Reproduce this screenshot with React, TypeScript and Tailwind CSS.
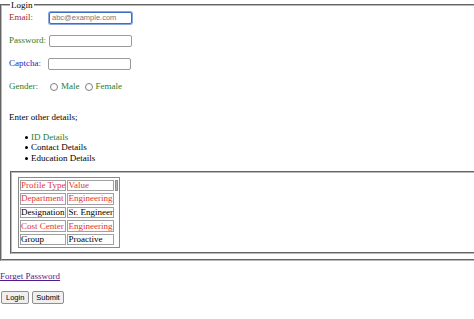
import React from "react";

const serif = "font-['Liberation_Serif','Times_New_Roman',serif]";
const sans = "font-['Liberation_Sans',Arial,sans-serif]";

function TextBox({ placeholder, focus }: { placeholder?: string; focus?: boolean }) {
  return (
    <div
      className={`w-[83px] h-[12px] rounded-[2px] bg-white flex items-center pl-[2px] ${sans} text-[7.5px] text-[#777] leading-none ${
        focus ? "border border-[#3f6cc9] shadow-[0_0_0_1px_#8aa6e3]" : "border border-[#9a9a9a]"
      }`}
    >
      {placeholder}
    </div>
  );
}

function Radio() {
  return <div className="w-[8px] h-[8px] rounded-full border border-[#808080] bg-white shrink-0" />;
}

const rows: { k: string; v: string; red: boolean }[] = [
  { k: "Profile Type", v: "Value", red: true },
  { k: "Department", v: "Engineering", red: true },
  { k: "Designation", v: "Sr. Engineer", red: false },
  { k: "Cost Center", v: "Engineering", red: true },
  { k: "Group", v: "Proactive", red: false },
];

function Item({ children, className }: { children: React.ReactNode; className?: string }) {
  return (
    <li className={`flex items-center h-[10.5px] ${className ?? ""}`}>
      <span className="w-[3px] h-[3px] rounded-full bg-black mr-[3px]" />
      {children}
    </li>
  );
}

export default function App() {
  return (
    <div className={`w-[474px] h-[319px] overflow-hidden bg-white text-black ${serif} text-[9px]`}>
      <fieldset className="m-0 w-[700px] border-2 [border-style:groove] border-[#b8b8b8] pl-[7px] pr-2 pb-[5px] pt-0">
        <legend className="ml-[1px] px-[1px] leading-[10px] text-[9px]">Login</legend>
        <div className="mt-[2px] flex flex-col gap-[11px]">
          <div className="h-[12px] flex items-center">
            <span className="w-[40px] text-[#a52a2a]">Email:</span>
            <TextBox placeholder="abc@example.com" focus />
          </div>
          <div className="h-[12px] flex items-center">
            <span className="w-[40px] text-[#2a7d2a]">Password:</span>
            <TextBox />
          </div>
          <div className="h-[12px] flex items-center">
            <span className="w-[39px] text-[#1c1cc8]">Captcha:</span>
            <TextBox />
          </div>
          <div className="h-[12px] flex items-center text-[#2a7d2a]">
            <span className="w-[41px]">Gender:</span>
            <Radio />
            <span className="ml-[3px]">Male</span>
            <div className="ml-[5px]">
              <Radio />
            </div>
            <span className="ml-[3px]">Female</span>
          </div>
        </div>
        <div className="mt-[19px] leading-[10px]">Enter other details;</div>
        <ul className="mt-[10px] pl-[16px] list-none">
          <Item className="text-[#2a7d2a]">ID Details</Item>
          <Item>Contact Details</Item>
          <Item>Education Details</Item>
        </ul>
        <fieldset className="mt-[7px] ml-[1px] mr-0 mb-0 border-2 [border-style:groove] border-[#b8b8b8] pl-[6px] pt-[4px] pb-[4px] pr-0">
          <table className="border border-[#8a8a8a] border-separate [border-spacing:1px_2px] leading-[9px]">
            <tbody>
              {rows.map((r, i) => (
                <tr key={r.k}>
                  <td
                    className={`border border-[#a0a0a0] h-[11.6px] px-0 py-0 whitespace-nowrap ${
                      r.red ? "text-[#df3535]" : "text-black"
                    }`}
                  >
                    {r.k}
                  </td>
                  <td
                    className={`border border-[#a0a0a0] h-[11.6px] px-0 py-0 whitespace-nowrap ${
                      r.red ? "text-[#df3535]" : "text-black"
                    }`}
                  >
                    {r.v}
                  </td>
                  {i === 0 ? (
                    <td className="p-0 align-top">
                      <div className="w-[3px] h-[11px] bg-[#b0b0b0] border border-[#909090]" />
                    </td>
                  ) : null}
                </tr>
              ))}
            </tbody>
          </table>
        </fieldset>
      </fieldset>
      <div className="mt-[10px] h-[10px] leading-[10px]">
        <a href="#" className="text-[#551a8b] underline">
          Forget Password
        </a>
      </div>
      <div className="mt-[10px] flex gap-[3px] pl-[1px]">
        <button
          className={`h-[13px] px-[4px] ${sans} text-[7.5px] leading-none bg-[#efefef] border border-[#8f8f8f] rounded-[2px] text-black`}
        >
          Login
        </button>
        <button
          className={`h-[13px] px-[3px] ${sans} text-[7.5px] leading-none bg-[#efefef] border border-[#8f8f8f] rounded-[2px] text-black`}
        >
          Submit
        </button>
      </div>
    </div>
  );
}
